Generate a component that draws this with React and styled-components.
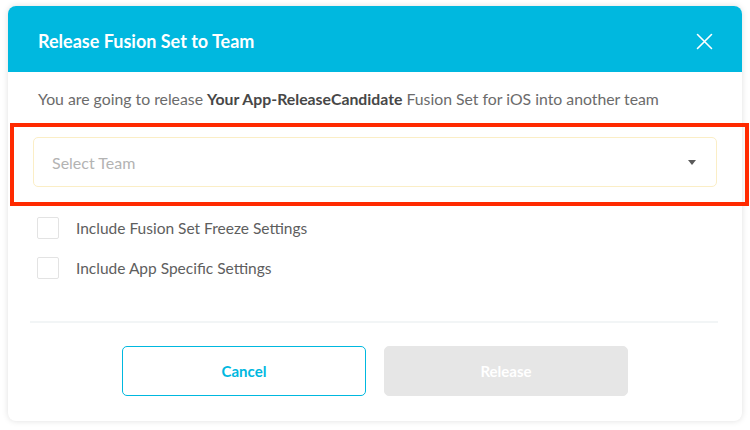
import styled, { createGlobalStyle } from "styled-components";

const GlobalStyle = createGlobalStyle`
  body {
    margin: 0;
    background: #ffffff;
    font-family: Lato, "Open Sans", sans-serif;
  }
`;

const Page = styled.div`
  width: 750px;
  height: 430px;
  padding: 6px 8px;
  box-sizing: border-box;
`;

const Modal = styled.div`
  width: 734px;
  height: 415px;
  background: #fff;
  border-radius: 8px;
  box-shadow: 0 0 6px rgba(0, 0, 0, 0.13);
  display: flex;
  flex-direction: column;
`;

const Header = styled.div`
  height: 66px;
  background: #00b8df;
  border-radius: 8px 8px 0 0;
  display: flex;
  align-items: center;
  justify-content: space-between;
  padding: 0 29px 0 30px;
`;

const Title = styled.h2`
  margin: 0;
  color: #fff;
  font-size: 18px;
  font-weight: 700;
  padding-top: 3px;
`;

const CloseButton = styled.button`
  border: none;
  background: none;
  padding: 0;
  width: 17px;
  height: 17px;
  display: flex;
  cursor: pointer;
  margin-top: 4px;
`;

const Body = styled.div`
  padding: 17px 25px 0;
`;

const Description = styled.p`
  margin: 0 0 0 5px;
  font-size: 15.8px;
  line-height: 20px;
  color: #6b6b6b;

  & b {
    color: #474747;
  }
`;

const SelectWrap = styled.div`
  position: relative;
  margin-top: 28px;
`;

const Select = styled.div`
  height: 50px;
  box-sizing: border-box;
  border: 1px solid #fbeec6;
  border-radius: 5px;
  display: flex;
  align-items: center;
  justify-content: space-between;
  padding: 0 20px 0 18px;
  font-size: 16px;
  color: #b3b3b3;
`;

const Caret = styled.span`
  width: 0;
  height: 0;
  border-left: 4px solid transparent;
  border-right: 4px solid transparent;
  border-top: 5px solid #5a5a5a;
  margin-top: 1px;
`;

const Highlight = styled.div`
  position: absolute;
  top: -14px;
  left: -23px;
  right: -32px;
  bottom: -19px;
  border: 4px solid #ff2a00;
  pointer-events: none;
`;

const Options = styled.div`
  display: flex;
  flex-direction: column;
  gap: 18px;
  margin-top: 30px;
  padding-left: 4px;
`;

const OptionRow = styled.label`
  display: flex;
  align-items: center;
  gap: 17px;
  font-size: 15.5px;
  color: #5e5e5e;
`;

const Box = styled.span`
  width: 22px;
  height: 22px;
  box-sizing: border-box;
  border: 1px solid #e3e3e3;
  border-radius: 2px;
  background: #fff;
`;

const Divider = styled.hr`
  border: none;
  height: 2px;
  background: #f2f5f6;
  margin: 42px 24px 0 22px;
`;

const Footer = styled.div`
  display: flex;
  justify-content: center;
  gap: 18px;
  padding-top: 23px;
`;

const Button = styled.button`
  width: 244px;
  height: 50px;
  border-radius: 5px;
  font-family: Lato, "Open Sans", sans-serif;
  font-size: 15px;
  font-weight: 700;
  cursor: pointer;
  border: 1px solid ${(p) => (p.$primary ? "#e6e6e6" : "#00b8df")};
  background: ${(p) => (p.$primary ? "#e6e6e6" : "#fff")};
  color: ${(p) => (p.$primary ? "#fff" : "#00b8df")};
`;

const options = ["Include Fusion Set Freeze Settings", "Include App Specific Settings"];

export default function App() {
  return (
    <Page>
      <GlobalStyle />
      <Modal>
        <Header>
          <Title>Release Fusion Set to Team</Title>
          <CloseButton aria-label="Close">
            <svg width="17" height="17" viewBox="0 0 17 17">
              <path d="M1.5 1.5 L15.5 15.5 M15.5 1.5 L1.5 15.5" stroke="#fff" strokeWidth="1.6" strokeLinecap="round" />
            </svg>
          </CloseButton>
        </Header>
        <Body>
          <Description>
            You are going to release <b>Your App-ReleaseCandidate</b> Fusion Set for iOS into another team
          </Description>
          <SelectWrap>
            <Select>
              <span>Select Team</span>
              <Caret />
            </Select>
            <Highlight />
          </SelectWrap>
          <Options>
            {options.map((o) => (
              <OptionRow key={o}>
                <Box />
                {o}
              </OptionRow>
            ))}
          </Options>
        </Body>
        <Divider />
        <Footer>
          <Button>Cancel</Button>
          <Button $primary>Release</Button>
        </Footer>
      </Modal>
    </Page>
  );
}
